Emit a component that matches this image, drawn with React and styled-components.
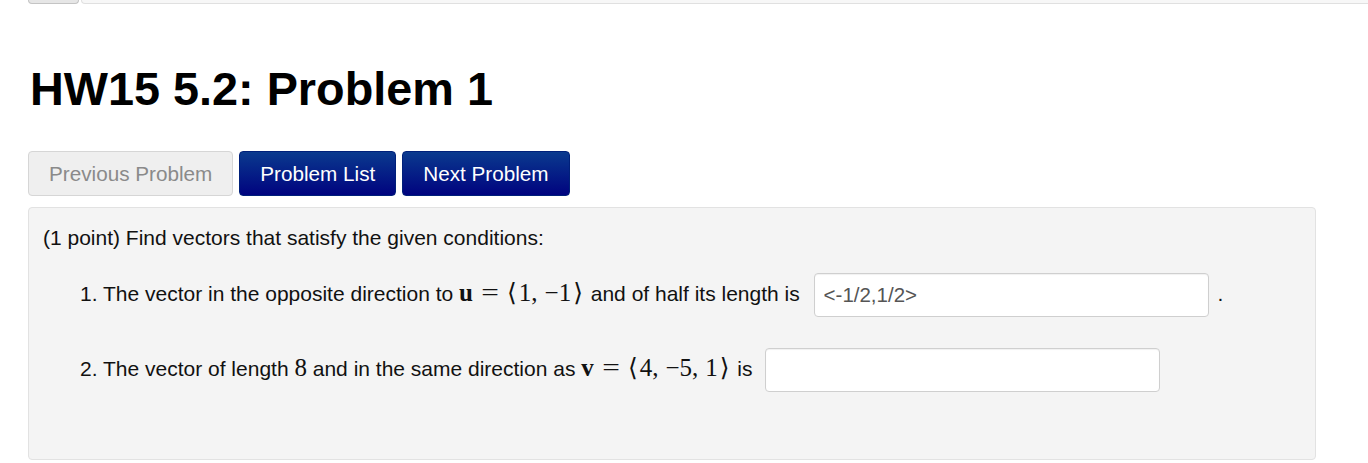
import React from "react";
import styled, { createGlobalStyle } from "styled-components";

const GlobalStyle = createGlobalStyle`
  body {
    margin: 0;
    background: #ffffff;
    font-family: "Liberation Sans", Arial, sans-serif;
    color: #111;
  }
`;

const Page = styled.div`
  width: 1288px;
  padding: 0 0 0 28px;
`;

const TopStrip = styled.div`
  display: flex;
  gap: 2px;
  height: 4px;
  margin-right: -52px;
`;

const StubButton = styled.div`
  width: 49px;
  background: #e6e6e6;
  border: 1px solid #c4c4c4;
  border-top: none;
  border-radius: 0 0 5px 5px;
`;

const StubBar = styled.div`
  flex: 1;
  background: #f7f7f7;
  border: 1px solid #e0e0e0;
  border-top: none;
  border-right: none;
  border-radius: 0 0 0 5px;
`;

const Title = styled.h1`
  margin: 60px 0 0 2px;
  font-size: 46.8px;
  line-height: 50px;
  font-weight: 700;
  color: #000;
`;

const NavBar = styled.div`
  display: flex;
  gap: 6px;
  margin-top: 37px;
`;

const NavButton = styled.button`
  height: 45px;
  padding: 0 20px;
  font-family: "Liberation Sans", Arial, sans-serif;
  font-size: 20.7px;
  border-radius: 4px;
  border: 1px solid ${({ disabled }) => (disabled ? "#d6d6d6" : "#00207a")};
  color: ${({ disabled }) => (disabled ? "#8a8a8a" : "#ffffff")};
  background: ${({ disabled }) =>
    disabled ? "#efefef" : "linear-gradient(to bottom, #0a3a8e, #00037f)"};
`;

const ProblemPanel = styled.div`
  margin-top: 11px;
  background: #f4f4f4;
  border: 1px solid #e2e2e2;
  border-radius: 4px;
  padding: 14px 14px 68px;
  font-size: 21px;
`;

const Intro = styled.div`
  line-height: 32px;
`;

const Items = styled.div`
  display: flex;
  flex-direction: column;
  gap: 31px;
  margin-top: 18px;
  padding-left: 37px;
`;

const Item = styled.div`
  height: 44px;
  line-height: 44px;
  white-space: nowrap;
`;

const Math = styled.span`
  font-family: "Liberation Serif", "DejaVu Serif", serif;
  font-size: 25px;
  line-height: 1;
  margin-right: ${({ $after }) => $after || 0}px;
`;

const Bold = styled.span`
  font-weight: 700;
`;

const Rel = styled.span`
  display: inline-block;
  margin: 0 10px;
  transform: scaleX(1.25);
`;

const Comma = styled.span`
  margin-right: 7px;
`;

const Bracket = styled.span`
  font-family: "DejaVu Serif", serif;
  font-weight: 300;
  font-size: 25px;
  margin: ${({ $side }) => ($side === "l" ? "0 2px 0 0" : "0 0 0 2px")};
`;

const AnswerBox = styled.input`
  width: 395px;
  height: 44px;
  box-sizing: border-box;
  vertical-align: middle;
  margin-left: ${({ $gap }) => $gap}px;
  padding: 0 9px;
  border: 1px solid #cfcfcf;
  border-radius: 4px;
  background: #fff;
  box-shadow: inset 0 1px 1px rgba(0, 0, 0, 0.06);
  font-family: "Liberation Sans", Arial, sans-serif;
  font-size: 20.5px;
  color: #555;
`;

const Period = styled.span`
  margin-left: 9px;
`;

export default function App() {
  return (
    <Page>
      <GlobalStyle />
      <TopStrip>
        <StubButton />
        <StubBar />
      </TopStrip>
      <Title>HW15 5.2: Problem 1</Title>
      <NavBar>
        <NavButton disabled>Previous Problem</NavButton>
        <NavButton>Problem List</NavButton>
        <NavButton>Next Problem</NavButton>
      </NavBar>
      <ProblemPanel>
        <Intro>(1 point) Find vectors that satisfy the given conditions:</Intro>
        <Items>
          <Item>
            1. The vector in the opposite direction to{" "}
            <Math $after={2}>
              <Bold>u</Bold>
              <Rel>=</Rel>
              <Bracket $side="l">⟨</Bracket>1,<Comma />−1<Bracket $side="r">⟩</Bracket>
            </Math>{" "}
            and of half its length is{" "}
            <AnswerBox $gap={8} defaultValue="<-1/2,1/2>" />
            <Period>.</Period>
          </Item>
          <Item>
            2. The vector of length <Math>8</Math> and in the same direction as{" "}
            <Math $after={2}>
              <Bold>v</Bold>
              <Rel>=</Rel>
              <Bracket $side="l">⟨</Bracket>4,<Comma />−5,<Comma />1<Bracket $side="r">⟩</Bracket>
            </Math>{" "}
            is{" "}
            <AnswerBox $gap={7} defaultValue="" />
          </Item>
        </Items>
      </ProblemPanel>
    </Page>
  );
}
